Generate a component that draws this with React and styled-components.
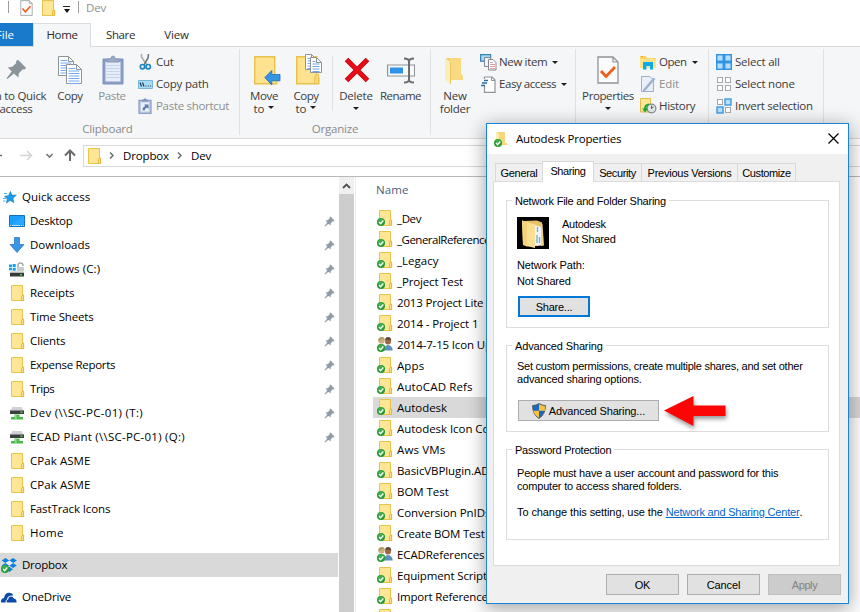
import React from 'react';
import styled, { createGlobalStyle, css } from 'styled-components';

const UI = '"Open Sans", "Noto Sans", sans-serif';
const CLASSIC = '"Liberation Sans", Arial, sans-serif';

const GlobalStyle = createGlobalStyle`
  * { box-sizing: border-box; }
  body { margin: 0; overflow: hidden; background: #fff; }
  svg { display: block; flex: none; }
`;

/* ---------- Shared ---------- */

const Label = styled.span`
  white-space: nowrap;
  letter-spacing: ${(p) => p.$ls || 0}px;
`;

const Icon = ({ w, h, children }) => (
  <svg width={w} height={h} viewBox={`0 0 ${w} ${h}`} fill="none">
    {children}
  </svg>
);

const Caret = styled.i`
  display: inline-block;
  flex: none;
  width: 0;
  height: 0;
  border: 3px solid transparent;
  border-top: 3px solid #1e1e1e;
  border-bottom: 0;
  margin-left: ${(p) => p.$gap || 0}px;
  margin-bottom: 2px;
`;

const LoneCaret = styled(Caret)`
  margin: 5px 0 0;
`;

/* ---------- Icons ---------- */

const FolderIcon = () => (
  <Icon w={14} h={16}>
    <path d="M.5.5h11v10h1.2v5H.5z" fill="#ffe695" stroke="#eac34f" />
    <path d="M10.500 15.500v-4.300l1-1.200h1v5.500z" fill="#ffe08a" stroke="#e5b93e" />
  </Icon>
);

const Badge = () => (
  <>
    <circle cx="4" cy="12" r="4" fill="#259a35" />
    <circle cx="4" cy="11" r="2.800" fill="#55b95a" opacity=".6" />
    <path d="M2 12l1.600 1.700L6.300 10.500" stroke="#fff" strokeWidth="1.300" />
  </>
);

const SyncedFolder = () => (
  <Icon w={16} h={17}>
    <path d="M2.500.5h11v10h1.200v5H2.500z" fill="#ffe695" stroke="#eac34f" />
    <path d="M12.500 15.500v-4.300l1-1.200h1v5.500z" fill="#ffe08a" stroke="#e5b93e" />
    <Badge />
  </Icon>
);

const SharedPeople = () => (
  <Icon w={16} h={17}>
    <circle cx="4.500" cy="4.500" r="3.200" fill="#d0b27c" />
    <path d="M1.500 5.500V3.500Q2 1 5 1q3 .3 2.500 3L5.500 3z" fill="#b39a63" />
    <path d="M1 9.500q3-3 7 0v3H1z" fill="#7ea07c" />
    <path d="M7 14.500q0-5 4-5.500 4.500.5 4.700 5.500z" fill="#5f8fba" />
    <circle cx="11" cy="5.500" r="3" fill="#9a6a48" />
    <path d="M8 4q.5-3 3-3 3.500 0 3.200 4l-2-1.500z" fill="#5a463a" />
    <Badge />
  </Icon>
);

const StarIcon = () => (
  <Icon w={15} h={15}>
    <path d="M8.500 1.500l1.300 3.600 4.500.1-3.400 3.100 1 4.200-3.900-2-3.500 2.600.8-4.200L2.500 6.300l4-.6z" fill="#1f9bea" stroke="#0f78c2" strokeWidth=".6" />
    <path d="M2 3.500h3M1 8.500h3M1 11h2.500" stroke="#49b0ef" />
  </Icon>
);

const DesktopIcon = () => (
  <Icon w={16} h={13}>
    <path d="M.5.5h15v11H.5z" fill="#1a9ffc" stroke="#1272bd" />
    <path d="M1 11L14 1h1v10z" fill="#4cb6ff" opacity=".35" />
    <path d="M1 10.500h14" stroke="#b6defa" strokeDasharray="1 1 8 1" />
  </Icon>
);

const DownloadIcon = () => (
  <Icon w={16} h={16}>
    <path d="M5.500.5h5v7h4.500L8 15.500 1 7.500h4.500z" fill="#3b95e6" stroke="#2d7cc9" strokeWidth=".8" />
  </Icon>
);

const WindowsDrive = () => (
  <Icon w={16} h={15}>
    <path d="M0 2.500h3v2.500H0zM3.700 2h3v3h-3zM0 5.800h3v2.500H0zM3.700 5.800h3v3h-3z" fill="#11a5e8" />
    <path d="M9 5V3q.3-2 2.500-2T14 3v1" stroke="#a3abb0" strokeWidth="1.500" />
    <path d="M8 5h7v4H8z" fill="#c9ced1" />
    <path d="M1.500 9.500h13l1 2H.5z" fill="#b4b6b8" />
    <path d="M1 11h14v3.500H1z" fill="#37393b" />
    <path d="M11 12h2v1.500h-2z" fill="#36dc3d" />
  </Icon>
);

const NetworkDrive = () => (
  <Icon w={14} h={14}>
    <path d="M2.500 1h9L14 5H0z" fill="#cfd1d3" />
    <path d="M0 4.500h14v3.500H0z" fill="#3c3e40" />
    <path d="M10.500 5.500h2v1.400h-2z" fill="#4be04f" />
    <path d="M4.500 8.500h5v2.500h3.500v2.500H1V11h3.500z" fill="#4cb951" />
    <path d="M5 9h1.500v4H5z" fill="#8ddc8c" />
  </Icon>
);

const DropboxIcon = () => (
  <Icon w={16} h={16}>
    <path d="M4.500 1L8.300 3.500 4.500 6 .7 3.500zM12 1l3.800 2.500L12 6 8.300 3.500zM4.500 6l3.800 2.500-3.800 2.500L.7 8.500zM12 6l3.800 2.500L12 11 8.300 8.500zM8.300 9.800l3.700 2.500-3.700 2.700-3.700-2.700z" fill="#1081de" />
    <path d="M8.300 3.800l3.600 2.300-3.600 2.300-3.600-2.300z" fill="#e9f2fa" />
    <Badge />
  </Icon>
);

const OneDriveIcon = () => (
  <Icon w={16} h={11}>
    <path d="M0 10.500q-.5-4 3-4.500Q4 .5 8.500.8q3 .2 4 2.800Q6.500 3 6 7.500q-1.500.5-1.500 3z" fill="#0b4aa8" />
    <path d="M5.800 10.500Q5 8 7.200 7.500 7.500 4.500 10 4.400q2 0 2.800 2Q16 7 15.500 10.500z" fill="#0b4aa8" />
  </Icon>
);

const PinSmall = () => (
  <Icon w={11} h={11}>
    <path d="M6.500.5l4 4-1 1-.8-.2-1.900 2L6.500 9.500l-2-1.700L1 10.500l-.6-.4L3.200 6.500 1.500 4.500l2.200-.3 2-1.900-.2-.8z" fill="#8f9ba5" />
  </Icon>
);

const PinLarge = () => (
  <Icon w={21} h={21}>
    <path d="M12 .8L20.200 9l-1.800 1.600-1.600-.4-3.900 4-.6 4.300-4.400-4L1.500 20l-1-.8 5.300-6.600L1.800 8.500l4.500-.8 3.900-3.800-.2-1.600z" fill="#8a949b" />
  </Icon>
);

const Sheet = ({ x, y, w, h, lines }) => (
  <g>
    <path d={`M${x} ${y}h${w - 5}l5 5v${h - 5}h-${w}z`} fill="#fff" stroke="#8e9499" />
    <path d={`M${x + w - 5} ${y}v5h5`} stroke="#8e9499" />
    {Array.from({ length: lines }, (_, i) => (
      <path key={i} d={`M${x + 2} ${y + 4 + i * 2.5}h${i < 1 ? w - 8 : w - 4}`} stroke="#75a9ed" />
    ))}
  </g>
);

const CopyIcon = () => (
  <Icon w={25} h={29}>
    <Sheet x={0.5} y={0.5} w={15} h={19} lines={6} />
    <Sheet x={8.5} y={8.5} w={15} h={19} lines={7} />
  </Icon>
);

const PasteIcon = () => (
  <Icon w={22} h={30}>
    <path d="M1 4h20v25H1z" fill="#8a9ec8" stroke="#7c90bb" />
    <path d="M3.500 7h15v19.500h-15z" fill="#e6edf9" />
    <path d="M4.500 10.500h13M4.500 13.500h13M4.500 16.500h13M4.500 19.500h13M4.500 22.500h13" stroke="#c4d2ec" />
    <path d="M5 7V4h4q0-3 2-3t2 3h4v3z" fill="#9dabc6" stroke="#8797b8" />
  </Icon>
);

const CutIcon = () => (
  <Icon w={13} h={16}>
    <path d="M2.500 0v3l5 7.500" stroke="#a9aeb2" strokeWidth="1.600" />
    <path d="M9.500 0L9 4 5 11" stroke="#72787c" strokeWidth="1.600" />
    <circle cx="3.500" cy="12.700" r="2.200" stroke="#1c82c6" strokeWidth="1.700" />
    <circle cx="9.200" cy="12.700" r="2.200" stroke="#1c82c6" strokeWidth="1.700" />
  </Icon>
);

const CopyPathIcon = () => (
  <Icon w={15} h={9}>
    <path d="M.5.5h14v8H.5z" fill="#a9dcf9" stroke="#7ab5d8" />
    <path d="M2 2.500l1.500 4M4.500 2.500l1.500 4" stroke="#16324a" strokeWidth="1.100" />
    <path d="M7.500 6h1M9.800 6h1M12 6h1" stroke="#16324a" strokeWidth="1.200" />
  </Icon>
);

const PasteShortcutIcon = () => (
  <Icon w={14} h={16}>
    <path d="M1 2.500h12v13H1z" fill="#bccbe6" stroke="#8da0c6" strokeWidth="1.300" />
    <path d="M3 4.500h8v9H3z" fill="#e9eff9" />
    <path d="M4 3.500V1.500h1.500L7 0l1.500 1.500H10v2z" fill="#8496b8" />
    <path d="M4.500 12q0-3 3-4L6 6.500h4.500V11L9 9.500q-2 .5-2.500 3z" fill="#5a76ad" />
  </Icon>
);

const MoveIcon = () => (
  <Icon w={28} h={29}>
    <path d="M.7.7h20v21h2v6H.7z" fill="#fde38f" stroke="#e8c04b" strokeWidth="1.400" />
    <path d="M10.800 21.500l7-7v4H26v6.300h-8.200V29z" fill="#3794e4" stroke="#1c6cb8" strokeWidth=".8" />
  </Icon>
);

const CopyToIcon = () => (
  <Icon w={27} h={32}>
    <path d="M.7 2.700h20v21h2v6H.7z" fill="#fde38f" stroke="#e8c04b" strokeWidth="1.400" />
    <path d="M18.700 29.500v-6l1.500-3h2.500v9z" fill="#fbd976" stroke="#e8c04b" />
    <Sheet x={9.5} y={0.500} w={11} h={15} lines={5} />
    <Sheet x={14.5} y={3.500} w={11} h={15} lines={5} />
  </Icon>
);

const DeleteIcon = () => (
  <Icon w={26} h={26}>
    <path d="M2.500 2.500l21 21M23.500 2.500l-21 21" stroke="#b80a14" strokeWidth="5" />
    <path d="M2.900 2.900l20.200 20.200M23.100 2.900L2.900 23.100" stroke="#e80b18" strokeWidth="3.800" />
  </Icon>
);

const RenameIcon = () => (
  <Icon w={28} h={27}>
    <path d="M.6 8h27v11H.6z" fill="#f8f9fa" stroke="#8f9498" strokeWidth="1.200" />
    <path d="M3 10.500h13v6H3z" fill="#2f92e6" />
    <path d="M17 1.500q5 0 5 3 0-3 5-3M22 4v19M17 25.500q5 0 5-3 0 3 5 3" stroke="#6a6e71" strokeWidth="2" />
  </Icon>
);

const NewFolderIcon = () => (
  <Icon w={20} h={28}>
    <path d="M2 1h15v16l2 2v4H5z" fill="#f4cd6b" />
    <path d="M6 1h11v16l2 2v4H6z" fill="#f9d982" />
    <path d="M1 1l5.500 4v22L1 23z" fill="#fdeeb5" />
    <path d="M6.500 5v22" stroke="#ecc564" />
  </Icon>
);

const NewItemIcon = () => (
  <Icon w={17} h={17}>
    <path d="M.6.600h10v6.500h-10z" fill="#a7d8f5" stroke="#3c83b5" strokeWidth="1.200" />
    <path d="M4.500 3.500h6v9h-6z" fill="#eef5fb" stroke="#83898e" />
    <path d="M8.500 5.500h4.500l3 3v7.500H8.500z" fill="#fff" stroke="#83898e" />
    <path d="M10 8.500h3M10 10.500h5M10 12.500h5M10 14.500h5" stroke="#d99ca2" />
  </Icon>
);

const EasyAccessIcon = () => (
  <Icon w={15} h={17}>
    <path d="M3.500 3V1h7.500l3 3v12.400H3.500V10" fill="#fff" stroke="#8e9499" strokeWidth="1.200" />
    <path d="M10.500 1v3.500H14" stroke="#8e9499" />
    <path d="M3 4.500h4M1 7h5M0 9.500h4" stroke="#2c6ea5" strokeWidth="1.300" />
  </Icon>
);

const CheckSheet = ({ w = 22, h = 28 }) => (
  <svg width={w} height={h} viewBox="0 0 22 28" fill="none">
    <path d="M1 1h15l5 5v21H1z" fill="#fbfbfc" stroke="#8e9499" strokeWidth="1.300" />
    <path d="M16 1v5h5" stroke="#8e9499" strokeWidth="1.200" />
    <path d="M4 15l5 5.500L18 11" stroke="#f05e1c" strokeWidth="2.800" />
  </svg>
);

const OpenIcon = () => (
  <Icon w={16} h={15}>
    <path d="M0 1h6l1.500 2H16v10H0z" fill="#fbd667" />
    <path d="M0 4h16v9H0z" fill="#ffe28a" />
    <path d="M1 1.500h2" stroke="#f0a92c" />
    <path d="M3 7h10v7.500h-3V11H6.500v3.500H3z" fill="#10a9e8" />
  </Icon>
);

const EditIcon = () => (
  <Icon w={15} h={16}>
    <path d="M.5.5H9L12.500 4v11.500H.5z" fill="#e9eff8" stroke="#9fb0ce" />
    <path d="M14 3L4 14.500l-1.500.5.5-2L12.500 2z" fill="#a5b6d4" stroke="#8ea1c5" strokeWidth=".7" />
  </Icon>
);

const HistoryIcon = () => (
  <Icon w={17} h={16}>
    <path d="M.5.500h10V14H.5z" fill="#ffe695" stroke="#e2bd4c" />
    <circle cx="11.500" cy="10.500" r="4.400" fill="#e4e7e8" stroke="#858b8f" strokeWidth="1.200" />
    <path d="M11.500 7.500v3l2-1.500" stroke="#53585c" />
    <path d="M9 5.500q-5 .5-5 5H2.200L5 14.500 8 10.500H6.500Q6.500 7.500 9 7z" fill="#21a637" />
  </Icon>
);

const SQUARES = [[1, 1], [9, 1], [1, 9], [9, 9]];
const SelectIcon = ({ on, frame }) => (
  <Icon w={16} h={16}>
    {frame && <path d="M0 0h16v16H0z" fill="#2b8fdd" />}
    {SQUARES.map(([x, y], i) => (
      <rect
        key={i}
        x={x + (on[i] ? 0 : 0.5)}
        y={y + (on[i] ? 0 : 0.5)}
        width={on[i] ? 6 : 5}
        height={on[i] ? 6 : 5}
        fill={on[i] ? '#b5defb' : '#fff'}
        stroke={on[i] ? '#3a9be6' : '#a4a8ab'}
        strokeWidth={on[i] && !frame ? 1.400 : 1}
      />
    ))}
  </Icon>
);

const ChevronRight = () => (
  <Icon w={5} h={7}><path d="M1 .5l3 3-3 3" stroke="#6c6c6c" strokeWidth="1.500" /></Icon>
);

const ShieldIcon = () => (
  <Icon w={14} h={16}>
    <path d="M7 .6Q10 2.500 13.400 2.500 13.500 11.500 7 15.400.5 11.500.6 2.500 4 2.500 7 .6z" fill="#1b67c4" stroke="#5a5f5f" />
    <path d="M7 1.200Q9.800 3 12.900 3v4.700H7zM1.200 7.700H7v7Q2.300 11.600 1.200 7.700z" fill="#fcc23c" />
  </Icon>
);

const LargeFolder = () => (
  <Icon w={32} h={32}>
    <path d="M0 0h32v32H0z" fill="#000" />
    <path d="M6 4l14-.5 5 2v23L9 29.500z" fill="#e9c267" />
    <path d="M18 8l6 2v18l-6 1z" fill="#f1f3f5" />
    <path d="M20.500 10v5M20 18v8M22.500 20v6" stroke="#6fb0df" strokeWidth="1.300" />
    <path d="M24 6l1.500 1 1.500 21.500-3 .5z" fill="#f3d27d" />
    <path d="M5 3.500l13 4v23.500L6 28z" fill="#fadf91" />
    <path d="M5 3.500l5 1.600V29L6 28z" fill="#f6d27a" />
  </Icon>
);

/* ---------- Explorer frame ---------- */

const Screen = styled.div`
  position: relative;
  display: flex;
  flex-direction: column;
  width: 860px;
  height: 612px;
  overflow: hidden;
  background: #fff;
  color: #000;
  font: 11.5px/13px ${UI};
`;

const TitleBar = styled.header`
  display: flex;
  align-items: flex-start;
  height: 23px;
  padding-left: 8px;
  color: #8f8f8f;
`;

const TitleSeparator = styled.i`
  width: 1px;
  height: 12px;
  margin-top: 1px;
  background: #9b9b9b;
`;

const TitleSlot = styled.div`
  margin: ${(p) => p.$top || 0}px 0 0 ${(p) => p.$left}px;
`;

const QuickMenuMark = styled.i`
  display: flex;
  flex-direction: column;
  align-items: center;
  width: 7px;
  margin: 6px 8px 0 7px;
  border-top: 1px solid #222;
  padding-top: 2px;
  &::after { content: ''; border: 3.5px solid transparent; border-top: 4px solid #111; border-bottom: 0; }
`;

const TabStrip = styled.nav`
  display: flex;
  height: 24px;
  margin-bottom: -1px;
  position: relative;
  line-height: 24px;
  color: #2b2b2b;
`;

const FileTab = styled.div`
  width: 33px;
  height: 23px;
  padding-right: 19px;
  display: flex;
  justify-content: flex-end;
  background: #1979ca;
  color: #fff;
`;

const RibbonTab = styled.div`
  width: ${(p) => p.$w}px;
  text-align: center;
  ${(p) => p.$active && css`
    background: #f5f6f7;
    border: 1px solid #dadbdc;
    border-bottom: 0;
    line-height: 22px;
  `}
`;

const Ribbon = styled.section`
  display: flex;
  flex: none;
  height: 93px;
  background: #f5f6f7;
  border: solid #dadbdc;
  border-width: 1px 0;
  color: #3b3b3b;
`;

const RibbonGroup = styled.div`
  flex: none;
  display: flex;
  flex-direction: column;
  width: ${(p) => p.$w}px;
  margin-left: ${(p) => p.$shift || 0}px;
`;

const RibbonItems = styled.div`
  display: flex;
  height: 75px;
`;

const GroupLabel = styled.div`
  height: 14px;
  line-height: 14px;
  text-align: center;
  color: #8b8b8b;
`;

const Divider = styled.i`
  flex: none;
  width: 1px;
  margin: ${(p) => (p.$short ? '9px 0 11px 8px' : '2px 0 3px')};
  background: #dfe1e3;
`;

const TallButton = styled.div`
  flex: none;
  display: flex;
  flex-direction: column;
  align-items: center;
  width: ${(p) => p.$w}px;
  white-space: nowrap;
  color: ${(p) => (p.$dim ? '#8f8f8f' : 'inherit')};
`;

const TallIcon = styled.div`
  height: 42px;
  padding-top: ${(p) => p.$top}px;
  margin-left: ${(p) => p.$dx || 0}px;
`;

const TallLine = styled.div`
  display: flex;
  align-items: center;
  height: 13px;
`;

const SmallList = styled.div`
  margin: 4px 0 0 ${(p) => p.$left}px;
`;

const SmallButton = styled.div`
  display: flex;
  align-items: center;
  height: 22px;
  color: ${(p) => (p.$dim ? '#8f8f8f' : 'inherit')};
  ${Label} { margin-bottom: 2px; }
  ${Caret} { margin-bottom: 0; }
`;

const SmallIcon = styled.div`
  display: flex;
  justify-content: center;
  width: 16px;
  margin-right: 3px;
`;

const Tall = ({ w, icon, top, dx, lines, ls, dim, caret }) => (
  <TallButton $w={w} $dim={dim}>
    <TallIcon $top={top} $dx={dx}>{icon}</TallIcon>
    {lines.map((t, i) => (
      <TallLine key={t}>
        <Label $ls={ls[i]}>{t}</Label>
        {caret && i === 1 && <Caret $gap={4} />}
      </TallLine>
    ))}
    {caret && lines.length === 1 && <LoneCaret />}
  </TallButton>
);

const Small = ({ icon, text, ls, dim, caret }) => (
  <SmallButton $dim={dim}>
    <SmallIcon>{icon}</SmallIcon>
    <Label $ls={ls}>{text}</Label>
    {caret && <Caret $gap={5} />}
  </SmallButton>
);

const AddressRow = styled.div`
  flex: none;
  display: flex;
  height: 38px;
  padding-top: 6px;
  border-bottom: 1px solid #b9bbbb;
`;

const NavArrows = styled.div`
  display: flex;
  align-items: center;
  width: 83px;
  height: 22px;
`;

const AddressField = styled.div`
  flex: 1;
  display: flex;
  align-items: center;
  height: 22px;
  padding: 0 0 1px 4px;
  border: 1px solid #d9d9d9;
  border-right: 0;
`;

const Crumb = styled.span`
  margin: 0 8px 1px 9px;
  letter-spacing: ${(p) => p.$ls}px;
`;

const CrumbGap = styled.span`
  width: 7px;
`;

/* ---------- Explorer body ---------- */

const Body = styled.main`
  flex: 1;
  min-height: 0;
  display: flex;
`;

const NavPane = styled.aside`
  width: 338px;
  margin-right: 1px;
  padding-top: 8px;
`;

const NavRow = styled.div`
  display: flex;
  align-items: center;
  height: 24px;
  padding: 0 3px 0 ${(p) => (p.$root ? 1 : 9)}px;
  margin-top: ${(p) => (p.$gap ? 8 : 0)}px;
  background: ${(p) => (p.$selected ? '#d9d9d9' : 'transparent')};
  ${Label} { margin-bottom: 2px; }
`;

const NavIcon = styled.div`
  display: flex;
  justify-content: ${(p) => (p.$end ? 'flex-end' : 'center')};
  width: 16px;
  margin-right: 5px;
`;

const NavPin = styled.div`
  margin-left: auto;
`;

const Scrollbar = styled.div`
  flex: none;
  width: 15px;
  background: #cdcdcd;
`;

const ScrollUp = styled.div`
  display: flex;
  align-items: center;
  justify-content: center;
  height: 17px;
  background: #f0f0f0;
`;

const FilePane = styled.section`
  flex: 1;
  margin-left: 1px;
  padding-left: 17px;
  border-left: 1px solid #ededed;
`;

const ColumnHeader = styled.div`
  height: 31px;
  padding-left: 3px;
  line-height: 26px;
  color: #4c607a;
`;

const FileRow = styled.div`
  display: flex;
  align-items: center;
  height: 21px;
  padding-left: 4px;
  gap: 4px;
  background: ${(p) => (p.$selected ? '#d9d9d9' : 'transparent')};
`;

/* ---------- Dialog ---------- */

const Dialog = styled.section`
  position: absolute;
  left: 486px;
  top: 123px;
  width: 363px;
  height: 481px;
  background: #f0f0f0;
  border: 1px solid #1883d7;
  box-shadow: 0 4px 18px 1px rgba(0, 0, 0, 0.36);
  font: 11px/13px ${CLASSIC};
`;

const DialogTitle = styled.header`
  display: flex;
  align-items: center;
  height: 30px;
  padding: 0 10px 0 7px;
  background: #fff;
  font: 11.5px/30px ${UI};
`;

const TitleText = styled.h1`
  flex: 1;
  margin: 0 0 0 7px;
  font: inherit;
  letter-spacing: -0.2px;
`;

const CloseSlot = styled.div`
  margin: -2px -1px 0 0;
`;

const DialogTabs = styled.nav`
  position: relative;
  display: flex;
  align-items: flex-end;
  height: 27px;
  padding-left: 8px;
`;

const DialogTab = styled.div`
  width: ${(p) => p.$w}px;
  height: 18px;
  border: solid #d9d9d9;
  border-width: 1px 1px 0 ${(p) => (p.$first ? 1 : 0)}px;
  border-right-width: ${(p) => (p.$first ? 0 : 1)}px;
  line-height: 18px;
  text-align: center;
  white-space: nowrap;
  ${(p) => p.$active && css`
    height: 21px;
    margin-bottom: -1px;
    border-width: 1px 1px 0;
    background: #fff;
  `}
`;

const Pane = styled.div`
  width: 347px;
  height: 385px;
  margin-left: 6px;
  padding: 18px 10px 0 12px;
  background: #fff;
  border: 1px solid #dcdcdc;
`;

const GroupBox = styled.div`
  height: ${(p) => p.$h}px;
  margin-bottom: 17px;
  padding-left: 10px;
  border: 1px solid #dcdcdc;
`;

const Legend = styled.div`
  width: fit-content;
  height: 14px;
  margin: -7px 0 0 -5px;
  padding: 0 3px;
  line-height: 14px;
  background: #fff;
`;

const Share = styled.div`
  display: flex;
  gap: 13px;
  height: 32px;
  margin: 9px 0 8px;
  line-height: 15px;
`;

const Line = styled.div`
  height: ${(p) => p.$h || 13}px;
  line-height: ${(p) => p.$h || 13}px;
  margin-top: ${(p) => p.$top || 0}px;
  white-space: nowrap;
`;

const Link = styled.a`
  color: #0066cc;
  text-decoration: underline;
  letter-spacing: -0.2px;
`;

const Button = styled.button`
  display: flex;
  align-items: center;
  justify-content: center;
  width: ${(p) => p.$w}px;
  height: 21px;
  padding: 0;
  margin: ${(p) => (p.$top ? `${p.$top}px 0 0 1px` : 0)};
  border: ${(p) => (p.$focus ? '2px solid #0078d7' : '1px solid #adadad')};
  background: #e1e1e1;
  color: #000;
  font: inherit;
  ${Label} { margin-top: 1px; }
  &:disabled { background: #cccccc; border-color: #bfbfbf; color: #838383; }
`;

const Footer = styled.footer`
  display: flex;
  justify-content: flex-end;
  gap: 8px;
  padding: 8px 7px 0 0;
`;

const Pointer = styled.div`
  position: absolute;
  left: 176px;
  top: 271px;
  filter: drop-shadow(1px 3px 2px rgba(0, 0, 0, 0.4));
`;

/* ---------- Data ---------- */

const folder = <FolderIcon />;
const net = <NetworkDrive />;

const NAV = [
  { icon: <StarIcon />, text: 'Quick access', ls: 0, root: true },
  { icon: <DesktopIcon />, text: 'Desktop', ls: -0.27, pin: true },
  { icon: <DownloadIcon />, text: 'Downloads', ls: 0, pin: true },
  { icon: <WindowsDrive />, text: 'Windows (C:)', ls: 0.1, pin: true },
  { icon: folder, end: true, text: 'Receipts', ls: -0.08, pin: true },
  { icon: folder, end: true, text: 'Time Sheets', ls: -0.14, pin: true },
  { icon: folder, end: true, text: 'Clients', ls: -0.11, pin: true },
  { icon: folder, end: true, text: 'Expense Reports', ls: -0.3, pin: true },
  { icon: folder, end: true, text: 'Trips', ls: -0.4, pin: true },
  { icon: net, text: 'Dev (\\\\SC-PC-01) (T:)', ls: 0.33, pin: true },
  { icon: net, text: 'ECAD Plant (\\\\SC-PC-01) (Q:)', ls: 0.25, pin: true },
  { icon: folder, end: true, text: 'CPak ASME', ls: 0.06 },
  { icon: folder, end: true, text: 'CPak ASME', ls: 0.06 },
  { icon: folder, end: true, text: 'FastTrack Icons', ls: -0.11 },
  { icon: folder, end: true, text: 'Home', ls: 0.3 },
  { icon: <DropboxIcon />, text: 'Dropbox', ls: -0.24, root: true, gap: true, selected: true },
  { icon: <OneDriveIcon />, text: 'OneDrive', ls: -0.2, root: true, gap: true },
];

const FILES = [
  ['_Dev', -0.4], ['_GeneralReferences', -0.5], ['_Legacy', 0], ['_Project Test', -0.15],
  ['2013 Project Lite', -0.17], ['2014 - Project 1', -0.1], ['2014-7-15 Icon Update', -0.16, true],
  ['Apps', 0.1], ['AutoCAD Refs', 0.13], ['Autodesk', -0.05], ['Autodesk Icon Collection', -0.05],
  ['Aws VMs', 0.15], ['BasicVBPlugin.ADSK', -0.08], ['BOM Test', -0.04], ['Conversion PnIDs', -0.07],
  ['Create BOM Test', -0.19], ['ECADReferences', -0.1, true], ['Equipment Scripts', -0.14],
  ['Import References', -0.18], ['Inventor', 0],
];

export default function App() {
  return (
    <Screen>
      <GlobalStyle />
      <TitleBar>
        <TitleSeparator />
        <TitleSlot $left={11}><CheckSheet w={13} h={16} /></TitleSlot>
        <TitleSlot $left={9}><FolderIcon /></TitleSlot>
        <QuickMenuMark />
        <TitleSeparator />
        <TitleSlot $left={7} $top={1}><Label $ls={-0.2}>Dev</Label></TitleSlot>
      </TitleBar>

      <TabStrip>
        <FileTab><Label>File</Label></FileTab>
        <RibbonTab $w={58} $active><Label $ls={-0.35}>Home</Label></RibbonTab>
        <RibbonTab $w={59}><Label $ls={-0.4}>Share</Label></RibbonTab>
        <RibbonTab $w={53}><Label $ls={-0.1}>View</Label></RibbonTab>
      </TabStrip>

      <Ribbon>
        <RibbonGroup $w={263} $shift={-24}>
          <RibbonItems>
            <Tall w={80} top={12} icon={<PinLarge />} lines={['Pin to Quick', 'access']} ls={[-0.3, -0.3]} />
            <Tall w={28} top={9} dx={1} icon={<CopyIcon />} lines={['Copy']} ls={[-0.4]} />
            <Tall w={56} top={8} dx={2} icon={<PasteIcon />} lines={['Paste']} ls={[-0.4]} dim />
            <SmallList $left={-3}>
              <Small icon={<CutIcon />} text="Cut" ls={-0.3} />
              <Small icon={<CopyPathIcon />} text="Copy path" ls={-0.2} />
              <Small icon={<PasteShortcutIcon />} text="Paste shortcut" ls={-0.3} dim />
            </SmallList>
          </RibbonItems>
          <GroupLabel><Label $ls={-0.2}>Clipboard</Label></GroupLabel>
        </RibbonGroup>
        <Divider />

        <RibbonGroup $w={190}>
          <RibbonItems>
            <Tall w={48} top={9} dx={8} icon={<MoveIcon />} lines={['Move', 'to']} ls={[-0.34, -0.1]} caret />
            <Tall w={36} top={7} dx={6} icon={<CopyToIcon />} lines={['Copy', 'to']} ls={[-0.5, -0.1]} caret />
            <Divider $short />
            <Tall w={46} top={10} dx={2} icon={<DeleteIcon />} lines={['Delete']} ls={[-0.19]} caret />
            <Tall w={43} top={10} icon={<RenameIcon />} lines={['Rename']} ls={[-0.5]} />
          </RibbonItems>
          <GroupLabel><Label $ls={-0.19}>Organize</Label></GroupLabel>
        </RibbonGroup>
        <Divider />

        <RibbonGroup $w={144}>
          <RibbonItems>
            <Tall w={48} top={10} dx={-2} icon={<NewFolderIcon />} lines={['New', 'folder']} ls={[-0.21, -0.24]} />
            <SmallList $left={1}>
              <Small icon={<NewItemIcon />} text="New item" ls={-0.35} caret />
              <Small icon={<EasyAccessIcon />} text="Easy access" ls={-0.44} caret />
            </SmallList>
          </RibbonItems>
        </RibbonGroup>
        <Divider />

        <RibbonGroup $w={132}>
          <RibbonItems>
            <Tall w={64} top={9} icon={<CheckSheet />} lines={['Properties']} ls={[-0.39]} caret />
            <SmallList $left={0}>
              <Small icon={<OpenIcon />} text="Open" ls={-0.5} caret />
              <Small icon={<EditIcon />} text="Edit" ls={-0.1} dim />
              <Small icon={<HistoryIcon />} text="History" ls={-0.3} />
            </SmallList>
          </RibbonItems>
        </RibbonGroup>
        <Divider />

        <RibbonGroup $w={114}>
          <RibbonItems>
            <SmallList $left={7}>
              <Small icon={<SelectIcon on={[1, 1, 1, 1]} frame />} text="Select all" ls={-0.22} />
              <Small icon={<SelectIcon on={[0, 0, 0, 0]} />} text="Select none" ls={-0.23} />
              <Small icon={<SelectIcon on={[0, 1, 1, 0]} />} text="Invert selection" ls={-0.27} />
            </SmallList>
          </RibbonItems>
        </RibbonGroup>
        <Divider />
      </Ribbon>

      <AddressRow>
        <NavArrows>
          <Icon w={83} h={22}>
            <path d="M0 10.500h2" stroke="#6a6a6a" strokeWidth="1.600" />
            <path d="M20 10.500h11M27 6l4.500 4.500L27 15" stroke="#d4d4d4" strokeWidth="1.600" />
            <path d="M46.500 9l3 3 3-3" stroke="#777" strokeWidth="1.600" />
            <path d="M70 16V6M65 10.500l5-5 5 5" stroke="#6a6a6a" strokeWidth="2" />
          </Icon>
        </NavArrows>
        <AddressField>
          <FolderIcon />
          <CrumbGap />
          <ChevronRight />
          <Crumb $ls={-0.15}>Dropbox</Crumb>
          <ChevronRight />
          <Crumb $ls={-0.1}>Dev</Crumb>
        </AddressField>
      </AddressRow>

      <Body>
        <NavPane>
          {NAV.map((n, i) => (
            <NavRow key={i} $root={n.root} $gap={n.gap} $selected={n.selected}>
              <NavIcon $end={n.end}>{n.icon}</NavIcon>
              <Label $ls={n.ls}>{n.text}</Label>
              {n.pin && <NavPin><PinSmall /></NavPin>}
            </NavRow>
          ))}
        </NavPane>
        <Scrollbar>
          <ScrollUp>
            <Icon w={9} h={6}><path d="M1 5l3.500-3.500L8 5" stroke="#505050" strokeWidth="1.800" /></Icon>
          </ScrollUp>
        </Scrollbar>
        <FilePane>
          <ColumnHeader><Label $ls={0.1}>Name</Label></ColumnHeader>
          {FILES.map(([name, ls, shared]) => (
            <FileRow key={name} $selected={name === 'Autodesk'}>
              {shared ? <SharedPeople /> : <SyncedFolder />}
              <Label $ls={ls}>{name}</Label>
            </FileRow>
          ))}
        </FilePane>
      </Body>

      <Dialog>
        <DialogTitle>
          <Icon w={15} h={17}>
            <path d="M3 1h8v11h2v2H3z" fill="#f8d67c" />
            <path d="M2 1l3 2v12l-3-2z" fill="#fdebb0" />
            <Badge />
          </Icon>
          <TitleText>Autodesk Properties</TitleText>
          <CloseSlot>
            <Icon w={11} h={11}><path d="M.5.5l10 10M10.500.5l-10 10" stroke="#000" strokeWidth="1.200" /></Icon>
          </CloseSlot>
        </DialogTitle>

        <DialogTabs>
          <DialogTab $w={47} $first><Label $ls={-0.33}>General</Label></DialogTab>
          <DialogTab $w={52} $active><Label $ls={-0.4}>Sharing</Label></DialogTab>
          <DialogTab $w={48}><Label $ls={-0.38}>Security</Label></DialogTab>
          <DialogTab $w={96}><Label $ls={-0.25}>Previous Versions</Label></DialogTab>
          <DialogTab $w={58}><Label $ls={-0.4}>Customize</Label></DialogTab>
        </DialogTabs>

        <Pane>
          <GroupBox $h={128}>
            <Legend><Label $ls={-0.22}>Network File and Folder Sharing</Label></Legend>
            <Share>
              <LargeFolder />
              <div>
                <Line $h={15}><Label $ls={-0.28}>Autodesk</Label></Line>
                <Line $h={15}><Label $ls={-0.2}>Not Shared</Label></Line>
              </div>
            </Share>
            <Line $h={16}><Label $ls={-0.11}>Network Path:</Label></Line>
            <Line $h={16}><Label $ls={-0.2}>Not Shared</Label></Line>
            <Button $w={72} $top={7} $focus><Label $ls={-0.25}>Share...</Label></Button>
          </GroupBox>

          <GroupBox $h={87}>
            <Legend><Label $ls={-0.14}>Advanced Sharing</Label></Legend>
            <Line $top={7}><Label $ls={-0.25}>Set custom permissions, create multiple shares, and set other</Label></Line>
            <Line><Label $ls={-0.15}>advanced sharing options.</Label></Line>
            <Button $w={141} $top={14}>
              <ShieldIcon />
              <Label $ls={-0.15}>&nbsp;Advanced Sharing...</Label>
            </Button>
          </GroupBox>

          <GroupBox $h={91}>
            <Legend><Label $ls={-0.24}>Password Protection</Label></Legend>
            <Line $top={10}><Label $ls={-0.18}>People must have a user account and password for this</Label></Line>
            <Line><Label $ls={-0.19}>computer to access shared folders.</Label></Line>
            <Line $top={13}>
              <Label $ls={-0.09}>To change this setting, use the </Label>
              <Link>Network and Sharing Center</Link>.
            </Line>
          </GroupBox>
        </Pane>

        <Footer>
          <Button $w={73}><Label $ls={-0.3}>OK</Label></Button>
          <Button $w={73}><Label $ls={-0.1}>Cancel</Label></Button>
          <Button $w={73} disabled><Label $ls={-0.4}>Apply</Label></Button>
        </Footer>

        <Pointer>
          <Icon w={64} h={32}>
            <path d="M1 15.500L30.500 1v9.500h32V21h-32v10z" fill="#fb0505" />
          </Icon>
        </Pointer>
      </Dialog>
    </Screen>
  );
}
